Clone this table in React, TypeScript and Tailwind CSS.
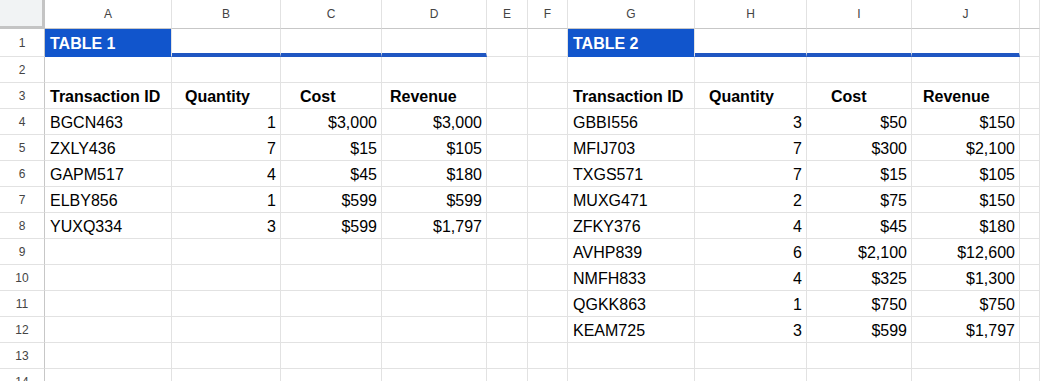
import React from 'react';

type Align = 'left' | 'right';

const columns = ['A', 'B', 'C', 'D', 'E', 'F', 'G', 'H', 'I', 'J', ''];

const table1 = [
  ['BGCN463', '1', '$3,000', '$3,000'],
  ['ZXLY436', '7', '$15', '$105'],
  ['GAPM517', '4', '$45', '$180'],
  ['ELBY856', '1', '$599', '$599'],
  ['YUXQ334', '3', '$599', '$1,797'],
];

const table2 = [
  ['GBBI556', '3', '$50', '$150'],
  ['MFIJ703', '7', '$300', '$2,100'],
  ['TXGS571', '7', '$15', '$105'],
  ['MUXG471', '2', '$75', '$150'],
  ['ZFKY376', '4', '$45', '$180'],
  ['AVHP839', '6', '$2,100', '$12,600'],
  ['NMFH833', '4', '$325', '$1,300'],
  ['QGKK863', '1', '$750', '$750'],
  ['KEAM725', '3', '$599', '$1,797'],
];

// header padding per column (leading spaces in the sheet)
const headPad = ['pl-[5px]', 'pl-[13px]', 'pl-[19px]', 'pl-[8px]'];
const headPad2 = ['pl-[5px]', 'pl-[14px]', 'pl-[24px]', 'pl-[11px]'];

function Cell({
  children,
  align = 'left',
  className = '',
}: {
  children?: React.ReactNode;
  align?: Align;
  className?: string;
}) {
  return (
    <div
      className={`flex items-center overflow-hidden whitespace-nowrap border-r border-b border-[#e2e2e2] pt-[2px] text-[16px] text-black ${
        align === 'right' ? 'justify-end pr-[4px]' : 'pl-[5px]'
      } ${className}`}
    >
      {children}
    </div>
  );
}

function RowNum({ n }: { n: number }) {
  return (
    <div className="flex items-center justify-center border-r border-b border-r-[#c7c7c7] border-b-[#e2e2e2] text-[12px] text-[#444]">
      {n}
    </div>
  );
}

function dataRow(r: number) {
  const a = table1[r - 4];
  const b = table2[r - 4];
  const cells: React.ReactNode[] = [<RowNum key="n" n={r} />];
  for (let i = 0; i < 4; i++) {
    cells.push(
      <Cell key={`a${i}`} align={i === 0 ? 'left' : 'right'}>
        {a ? a[i] : ''}
      </Cell>
    );
  }
  cells.push(<Cell key="e" />, <Cell key="f" />);
  for (let i = 0; i < 4; i++) {
    cells.push(
      <Cell key={`b${i}`} align={i === 0 ? 'left' : 'right'}>
        {b ? b[i] : ''}
      </Cell>
    );
  }
  cells.push(<Cell key="k" />);
  return cells;
}

export default function App() {
  const rows = [4, 5, 6, 7, 8, 9, 10, 11, 12, 13, 14];
  const headers1 = ['Transaction ID', 'Quantity', 'Cost', 'Revenue'];

  return (
    <div
      className="h-[381px] w-[1040px] overflow-hidden bg-white"
      style={{ fontFamily: '"Liberation Sans", Arial, sans-serif' }}
    >
      <div className="grid grid-cols-[45px_127px_109px_101px_105px_41px_40px_127px_112px_105px_108px_1fr] grid-rows-[29px_28px_repeat(13,26px)]">
        {/* column headers */}
        <div className="border-r-[3px] border-b-[3px] border-[#c4c4c4] bg-[#f1f3f4]" />
        {columns.map((c, i) => (
          <div
            key={i}
            className="flex items-center justify-center border-r border-b border-r-[#e2e2e2] border-b-[#c7c7c7] text-[12px] text-[#444]"
          >
            {c}
          </div>
        ))}

        {/* row 1 */}
        <RowNum n={1} />
        <Cell className="bg-[#1155cc] border-b-[#1155cc] font-bold text-white">TABLE 1</Cell>
        <Cell className="border-b-4 border-b-[#1f56c2]" />
        <Cell className="border-b-4 border-b-[#1f56c2]" />
        <Cell className="border-b-4 border-b-[#1f56c2]" />
        <Cell />
        <Cell />
        <Cell className="bg-[#1155cc] border-b-[#1155cc] font-bold text-white">TABLE 2</Cell>
        <Cell className="border-b-4 border-b-[#1f56c2]" />
        <Cell className="border-b-4 border-b-[#1f56c2]" />
        <Cell className="border-b-4 border-b-[#1f56c2]" />
        <Cell />

        {/* row 2 */}
        <RowNum n={2} />
        {columns.map((_, i) => (
          <Cell key={`r2${i}`} />
        ))}

        {/* row 3 */}
        <RowNum n={3} />
        {headers1.map((h, i) => (
          <div
            key={`h1${i}`}
            className={`flex items-center whitespace-nowrap border-r border-b border-[#e2e2e2] pt-[2px] text-[16px] font-bold text-black ${headPad[i]}`}
          >
            {h}
          </div>
        ))}
        <Cell />
        <Cell />
        {headers1.map((h, i) => (
          <div
            key={`h2${i}`}
            className={`flex items-center whitespace-nowrap border-r border-b border-[#e2e2e2] pt-[2px] text-[16px] font-bold text-black ${headPad2[i]}`}
          >
            {h}
          </div>
        ))}
        <Cell />

        {rows.map((r) => dataRow(r))}
      </div>
    </div>
  );
}
